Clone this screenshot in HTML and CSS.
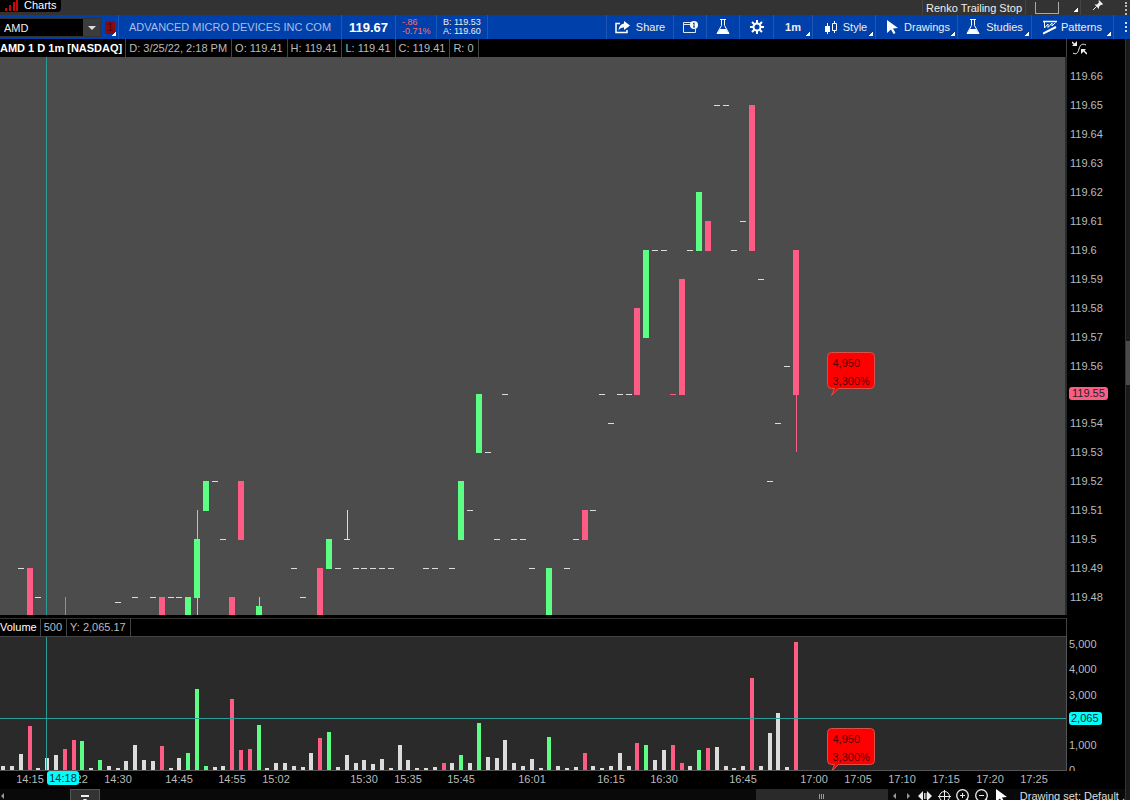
FILE: index.html
```html
<!DOCTYPE html>
<html lang="en">
  <head>
    <meta charset="utf-8">
    <title>Charts - AMD</title>
    <link rel="stylesheet" href="styles.css">
  </head>
  <body>
    <header class="tabs">
      <button class="tab">
        <svg width="14" height="11" viewBox="0 0 14 11" fill="#c40a0a"><path d="M0 8h2v3H0zM4 5h2v6H4zM8 2h2v9H8zM11 0h2v11h-2z"/></svg>
        Charts
      </button>
      <button class="study-name">Renko Trailing Stop</button>
      <button class="grid-pick more" aria-label="Chart grid"><span class="box"></span></button>
      <button class="pin" aria-label="Pin">
        <svg width="10" height="10" viewBox="0 0 10 10"><path d="M6 0l4 4-1 1-1-.3-2 2V9L1.500 4.500H4l2-2L5.500 1z" fill="#eee"/><path d="M3.500 6.500L0 10" stroke="#eee"/></svg>
      </button>
      <span class="grip"></span>
    </header>

    <div class="toolbar">
      <div class="symbol">
        <input type="text" id="symbol" value="AMD" aria-label="Symbol">
        <button class="drop" aria-label="Symbol list"><svg width="8" height="4" viewBox="0 0 8 4"><path d="M0 0h8L4 4z" fill="#ddd"/></svg></button>
      </div>
      <button class="link-color more" aria-label="Link color"><span class="swatch">1</span></button>
      <div class="company">ADVANCED MICRO DEVICES INC COM</div>
      <div class="last">119.67</div>
      <div class="quote down"><span>-.86</span><span>-0.71%</span></div>
      <div class="quote"><span>B: 119.53</span><span>A: 119.60</span></div>
      <div class="spacer"></div>
      <button class="tool share">
        <svg width="15" height="13" viewBox="0 0 15 13"><path d="M5 2.500H1v9h11V9" fill="none" stroke="#fff" stroke-width="1.500"/><path d="M9 0l6 4.500L9 9V6.500C6.500 6.300 4.800 7.500 3.500 9.500 3.800 5.500 5.800 3 9 2.500z" fill="#fff"/></svg>
        Share
      </button>
      <button class="tool alert" aria-label="Alerts">
        <svg width="15" height="13" viewBox="0 0 15 13"><path d="M8 1.500H.5v10h12V8M.5 3.500H7" fill="none" stroke="#dfe8fa"/><circle cx="11" cy="4" r="4" fill="#fff"/><path d="M11 1.500V6M10 2.500h1M10 6h2" stroke="#0040ab"/></svg>
      </button>
      <button class="tool alert" aria-label="Edit studies">
        <svg width="14" height="16" viewBox="0 0 14 16"><path d="M4 .5h6M5.500 1v5.500L1 14.500h12L8.500 6.500V1" fill="none" stroke="#fff"/><path d="M4 10h6l3 5H1z" fill="#fff"/></svg>
      </button>
      <button class="tool gear" aria-label="Settings">
        <svg width="14" height="14" viewBox="0 0 14 14" fill="none" stroke="#fff"><circle cx="7" cy="7" r="3.500" stroke-width="2"/><path d="M7 0v3M7 11v3M0 7h3M11 7h3M2 2l2.300 2.300M9.700 9.700L12 12M12 2L9.700 4.300M4.300 9.700L2 12" stroke-width="2"/></svg>
      </button>
      <button class="tool frame more">1m</button>
      <button class="tool style more">
        <svg width="12" height="13" viewBox="0 0 12 13"><path d="M2.500 2v11M9.500 0v3M9.500 10v2" stroke="#fff"/><path d="M0 5h5v6H0z" fill="#fff"/><path d="M7.500 2.500h4v7h-4z" fill="none" stroke="#fff"/></svg>
        Style
      </button>
      <button class="tool drawings more">
        <svg width="11" height="14" viewBox="0 0 11 14"><path d="M0 0l11 8-5 .5 2.500 4.500-2 1L4 9.500 0 13z" fill="#fff"/></svg>
        Drawings
      </button>
      <button class="tool studies more">
        <svg width="14" height="16" viewBox="0 0 14 16"><path d="M4 .5h6M5.500 1v5.500L1 14.500h12L8.500 6.500V1" fill="none" stroke="#fff"/><path d="M4 10h6l3 5H1z" fill="#fff"/></svg>
        Studies
      </button>
      <button class="tool patterns more">
        <svg width="14" height="15" viewBox="0 0 14 15" fill="none" stroke="#fff"><path d="M0 1.500h14" stroke-width="1.500"/><path d="M1.500 2v6L5 4v3.500L9 3v3l3.500-3.500"/><path d="M0 13.500L13 7" stroke-width="2"/></svg>
        Patterns
      </button>
      <span class="grip"></span>
    </div>

    <main class="workspace">
      <div class="panes">
        <div class="status">
          <b>AMD 1 D 1m [NASDAQ]</b>
          <span>D: 3/25/22, 2:18 PM</span>
          <span>O: 119.41</span>
          <span>H: 119.41</span>
          <span>L: 119.41</span>
          <span>C: 119.41</span>
          <span>R: 0</span>
        </div>
        <div class="corner">
          <svg width="15" height="14" viewBox="0 0 15 14" fill="none" stroke="#eee"><path d="M1 12c3 2 5 0 6-4s3-6 7-4"/><path d="M0 1l3 3M15 13l-3.500-3.500" stroke-width="1.500"/><path d="M5 0v5H0zM9 8h5L9 13z" fill="#eee" stroke="none"/></svg>
        </div>

        <svg class="plot" id="price"></svg>
        <svg class="axis" id="price-axis"></svg>

        <div class="status volume-status">
          <em>Volume</em>
          <span>500</span>
          <span>Y: 2,065.17</span>
        </div>
        <div class="blank"></div>

        <svg class="plot volume" id="volume"></svg>
        <svg class="axis" id="volume-axis"></svg>

        <svg class="time" id="time-axis"></svg>

        <footer class="bottom">
          <button class="scroll-left" aria-label="Scroll left"><svg width="3" height="6" viewBox="0 0 3 6"><path d="M3 0v6L0 3z" fill="#999"/></svg></button>
          <button class="collapse" aria-label="Collapse pane"><svg width="8" height="7" viewBox="0 0 8 7"><path d="M0 0h8v2H0zM2 4h4L4 7z" fill="#eee"/></svg></button>
          <div class="spacer"></div>
          <div class="thumb"><i></i><i></i><i></i></div>
          <button class="step" aria-label="Step left"><svg width="3" height="6" viewBox="0 0 3 6"><path d="M3 0v6L0 3z" fill="#999"/></svg></button>
          <button class="step" aria-label="Step right"><svg width="3" height="6" viewBox="0 0 3 6"><path d="M0 0v6l3-3z" fill="#999"/></svg></button>
          <button class="icon" aria-label="Expand"><svg width="14" height="10" viewBox="0 0 14 10"><path d="M5 0v10L0 5zM9 0v10l5-5z" fill="#eee"/><path d="M6.500 2v6M8 2v6" stroke="#ccc"/></svg></button>
          <button class="icon" aria-label="Crosshair"><svg width="13" height="13" viewBox="0 0 13 13" fill="none" stroke="#eee"><circle cx="6.500" cy="6.500" r="5"/><path d="M6.500 0v13M0 6.500h13"/></svg></button>
          <button class="icon" aria-label="Zoom in"><svg width="14" height="14" viewBox="0 0 14 14" fill="none" stroke="#eee"><circle cx="6.500" cy="6.500" r="5.800" stroke-width="1.300"/><path d="M4 6.500h5M6.500 4v5"/><path d="M10.500 10.500L14 14" stroke-width="2"/></svg></button>
          <button class="icon" aria-label="Zoom out"><svg width="14" height="14" viewBox="0 0 14 14" fill="none" stroke="#eee"><circle cx="6.500" cy="6.500" r="5.800" stroke-width="1.300"/><path d="M4 6.500h5"/><path d="M10.500 10.500L14 14" stroke-width="2"/></svg></button>
          <button class="icon" aria-label="Pointer"><svg width="11" height="14" viewBox="0 0 11 14"><path d="M0 0l11 8-5 .5 2.500 4.500-2 1L4 9.500 0 13z" fill="#fff"/></svg></button>
          <button class="set">Drawing set: Default .</button>
        </footer>
      </div>
      <div class="gutter"><span></span></div>
    </main>

    <script src="chart.js"></script>
  </body>
</html>
```
FILE: styles.css
```css
* {
  box-sizing: border-box;
}

body {
  display: flex;
  flex-direction: column;
  height: 100vh;
  margin: 0;
  overflow: hidden;
  background: #000;
  color: #bbb;
  font: 11px/14px "Liberation Sans", Arial, sans-serif;
}

button,
input {
  margin: 0;
  padding: 0;
  border: 0;
  background: none;
  color: inherit;
  font: inherit;
}

svg {
  flex: none;
}

.spacer {
  flex: 1;
}

/* top tabs */
.tabs {
  display: flex;
  height: 15px;
  background: #333;
  color: #eee;
}
.tab {
  display: flex;
  gap: 5px;
  width: 61px;
  height: 12px;
  padding-left: 5px;
  line-height: 10px;
  background: #000;
  color: #fff;
  border-radius: 0 0 4px 0;
}
.study-name {
  margin-left: auto;
  padding: 0 3px;
  line-height: 10px;
  height: 15px;
  border: solid #444;
  border-width: 0 1px;
}
.tabs button {
  align-items: flex-start;
}
.grid-pick {
  width: 55px;
  padding-left: 9px;
  text-align: left;
  border-right: 1px solid #444;
}
.box {
  display: block;
  width: 24px;
  height: 12px;
  border: 1px solid #aaa;
  border-top: 0;
}
.pin {
  display: flex;
  width: 44px;
  padding-left: 12px;
}
.grip {
  width: 5px;
  margin-top: 2px;
  border-left: 2px dotted #bbb;
}

/* small corner triangle on menu buttons */
.more {
  position: relative;
}
.more::after {
  content: "";
  position: absolute;
  right: 2px;
  bottom: 3px;
  width: 4px;
  height: 4px;
  background: linear-gradient(135deg, transparent 50%, #fff 50%);
}

/* toolbar */
.toolbar {
  display: flex;
  height: 24px;
  background: #0040ab;
  color: #eee;
}
.toolbar > div,
.toolbar > button {
  border-right: 1px solid #1c57b8;
}
.toolbar .symbol {
  display: flex;
  width: 101px;
  margin: 3px 0 2px;
  background: #000;
  border: 1px solid #333;
  border-left: 0;
}
.symbol input {
  flex: 1;
  min-width: 0;
  padding-left: 4px;
}
.drop {
  display: flex;
  align-items: center;
  justify-content: center;
  width: 17px;
  background: #3c3c3c;
}
.toolbar .link-color {
  width: 18px;
  padding: 0 4px;
}
.swatch {
  display: block;
  width: 10px;
  height: 13px;
  background: #8a0a12;
  color: #4c0008;
  line-height: 13px;
}
.company {
  width: 223px;
  padding-left: 10px;
  color: #a8bfe8;
  line-height: 24px;
}
.last {
  width: 54px;
  color: #fff;
  font-weight: bold;
  font-size: 13px;
  line-height: 26px;
  text-align: center;
}
.quote {
  display: flex;
  flex-direction: column;
  width: 51px;
  padding: 3px 0 0 6px;
  font-size: 9px;
  line-height: 9px;
}
.quote.down {
  width: 41px;
  color: #ff6a6a;
}
.tool {
  display: flex;
  align-items: center;
  justify-content: center;
  gap: 6px;
}
.share { width: 67px; }
.alert { width: 33px; }
.gear { width: 34px; }
.frame { width: 39px; font-weight: bold; }
.style { width: 63px; padding-left: 4px; }
.drawings { width: 82px; padding-left: 4px; }
.studies { width: 74px; }
.patterns { width: 82px; gap: 4px; }
.toolbar .grip {
  margin: 7px 0 7px 11px;
  border-color: #cfe0ff;
}

/* chart panes */
.workspace {
  display: flex;
  flex: 1;
  min-height: 0;
}
.panes {
  display: grid;
  flex: 1;
  min-width: 0;
  grid-template-columns: 1fr 58px;
  grid-template-rows: 18px 1fr 22px 134px 18px 11px;
}
.status {
  display: flex;
  border-right: 1px solid #444;
  line-height: 18px;
}
.status > * {
  padding: 0 4px 0 3px;
  border-right: 1px solid #444;
  white-space: nowrap;
}
.status b,
.status em {
  padding: 0 3px 0 0;
  color: #fff;
  font-style: normal;
}
.volume-status {
  margin-top: 3px;
  border-top: 1px solid #333;
  border-bottom: 1px solid #444;
  line-height: 17px;
}
.corner {
  padding: 2px 5px;
}
.plot {
  display: block;
  width: 100%;
  height: 100%;
  background: #4c4c4c;
  border-right: 2px solid #2a2a2a;
}
.plot.volume {
  background: #2a2a2a;
  border-right: 1px solid #555;
  border-bottom: 1px solid #555;
}
.axis,
.time {
  display: block;
  width: 100%;
  height: 100%;
  overflow: hidden;
}
.time {
  grid-column: 1 / 3;
}
.gutter {
  width: 5px;
  padding-top: 302px;
  background: #1a1a1a;
  border-left: 1px solid #333;
}
.gutter span {
  display: block;
  height: 44px;
  background: #4a4a4a;
}

/* marks */
.up { fill: #5cff84; }
.dn { fill: #ff5c85; }
.eq { fill: #dcdcdc; }
.cross {
  stroke: #2a9d96;
}
text {
  fill: #bbb;
}
.tag-cursor { fill: #00ffff; }
.tag-last { fill: #ff5c85; }
.tag-text { fill: #10282c; }
.callout {
  fill: #ff0000;
  stroke: #d8504a;
}
.callout-text { fill: #5a0000; }

/* bottom bar */
.bottom {
  grid-column: 1 / 3;
  display: flex;
  align-items: flex-start;
  height: 16px;
  background: #090909;
  color: #ddd;
}
.bottom button {
  display: flex;
  justify-content: center;
  flex: none;
}
.bottom .scroll-left {
  width: 5px;
  margin-right: 65px;
  padding-top: 4px;
}
.bottom .collapse {
  width: 30px;
  height: 16px;
  padding-top: 5px;
  background: #333;
  border: 1px solid #555;
}
.thumb {
  display: flex;
  justify-content: center;
  gap: 1px;
  width: 132px;
  height: 16px;
  padding-top: 5px;
  background: #2a2a2a;
}
.thumb i {
  width: 1px;
  height: 5px;
  background: #999;
}
.bottom .step {
  width: 14px;
  padding-top: 4px;
}
.bottom .icon {
  align-items: center;
  width: 19px;
  height: 14px;
}
.bottom .set {
  margin-left: 9px;
  white-space: nowrap;
}
```
FILE: chart.js
```js
var SLOTS = 121.1,      // bars that fit across the plot
    PRICE_TOP = 66.66,  // cents above 119
    PRICE_BOTTOM = 47.38,
    VOL_TOP = 5290,
    CURSOR = 5;

// [slot, open, close, high, low] in cents above 119, off-screen parts end at 47
var candles = [
  [3, 49, 47], [18, 48, 47], [21, 47, 48], [22, 48, 50, 51, 47],
  [23, 51, 52], [26, 48, 47], [27, 52, 50], [29, 47, 47.7, 48, 47], [36, 49, 47],
  [37, 49, 50], [52, 50, 52], [54, 53, 55], [62, 47, 49], [66, 51, 50],
  [72, 58, 55], [73, 57, 60], [77, 59, 55], [79, 60, 62], [80, 61, 60],
  [85, 65, 60], [90, 60, 55, 60, 53]
];

// slots that opened and closed at the same price
var flats = {
  47.83: [13],
  48: [4, 15, 17, 19, 20, 34],
  49: [2, 33, 38, 40, 41, 42, 43, 44, 48, 49, 51, 60, 64],
  50: [25, 39, 56, 58, 59, 65],
  51: [53, 67],
  52: [24, 87],
  53: [55],
  54: [69, 88],
  55: [57, 68, 70, 71],
  56: [89],
  59: [86],
  60: [74, 75, 78, 83],
  61: [84],
  65: [81, 82]
};

var volumes = [
  170, 170, 650, 1740, 60, 470, 580, 820, 1180, 1150, 60, 380, 170, 60, 340, 980,
  380, 340, 940, 60, 470, 670, 3210, 170, 100, 170, 2840, 780, 830, 1770, 60, 270,
  270, 170, 100, 670, 1270, 1510, 130, 580, 270, 380, 230, 450, 60, 980, 380, 60,
  60, 130, 270, 270, 610, 270, 1850, 500, 470, 1180, 270, 170, 450, 60, 1320, 170,
  60, 130, 670, 170, 60, 170, 670, 170, 1080, 1010, 380, 780, 980, 270, 170, 810,
  870, 910, 170, 60, 170, 3660, 170, 1490, 2280, 130, 5090
];
var volUp = [9, 11, 21, 22, 23, 29, 37, 52, 54, 62, 73, 79],
    volDown = [3, 7, 8, 18, 26, 27, 28, 36, 50, 66, 72, 76, 77, 80, 85, 90];

var times = {
  3: "14:15", 8: "14:22", 13: "14:30", 20: "14:45", 26: "14:55", 31: "15:02",
  41: "15:30", 46: "15:35", 52: "15:45", 60: "16:01", 69: "16:15", 75: "16:30",
  84: "16:45", 92: "17:00", 97: "17:05", 102: "17:10", 107: "17:15",
  112: "17:20", 117: "17:25"
};

function $(id) { return document.getElementById(id); }

function add(svg, name, attrs, text) {
  var el = document.createElementNS("http://www.w3.org/2000/svg", name);
  for (var k in attrs) el.setAttribute(k, attrs[k]);
  if (text) el.textContent = text;
  svg.appendChild(el);
  return el;
}

function rect(svg, cls, x, y, w, h, rx) {
  add(svg, "rect", { "class": cls, x: x, y: y, width: w, height: h, rx: rx || 0 });
}

function line(svg, x1, y1, x2, y2) {
  add(svg, "line", { "class": "cross", x1: x1, y1: y1, x2: x2, y2: y2 });
}

function callout(svg, x, y) {
  add(svg, "path", {
    "class": "callout",
    d: "M" + (x + 4) + " " + y + "h39q4 0 4 4v28q0 4 -4 4h-32l-7 7l3 -7h-3q-4 0 -4 -4v-28q0 -4 4 -4z"
  });
  add(svg, "text", { "class": "callout-text", x: x + 5, y: y + 14 }, "4,950");
  add(svg, "text", { "class": "callout-text", x: x + 5, y: y + 32 }, "3,300%");
}

function draw() {
  ["price", "price-axis", "volume", "volume-axis", "time-axis"].forEach(function(id) {
    $(id).textContent = "";
  });

  var price = $("price"), vol = $("volume"),
      box = price.getBoundingClientRect(),
      width = box.width, height = box.height,
      volHeight = vol.getBoundingClientRect().height - 1,
      pitch = width / SLOTS;

  function x(slot) { return 3.1 + slot * pitch; }
  function y(p) { return Math.round((PRICE_TOP - p) / (PRICE_TOP - PRICE_BOTTOM) * height); }
  function vy(v) { return Math.round(volHeight * (1 - v / VOL_TOP)); }

  candles.forEach(function(c) {
    var cls = c[2] > c[1] ? "up" : "dn",
        cx = Math.round(x(c[0])),
        top = y(Math.max(c[1], c[2])),
        bottom = y(Math.min(c[1], c[2]));
    if (c.length > 3) rect(price, cls, cx, y(c[3]), 1, y(c[4]) - y(c[3]));
    rect(price, cls, cx - 3, top, 6, bottom - top + 1);
  });
  Object.keys(flats).forEach(function(p) {
    flats[p].forEach(function(slot) {
      rect(price, "eq", Math.round(x(slot)) - 3, y(+p), 6, 1);
    });
  });
  rect(price, "dn", Math.round(x(76)) - 3, y(55), 6, 1);
  rect(price, "dn", Math.round(x(7)), y(48), 1, height);
  rect(price, "eq", Math.round(x(39)), y(51), 1, y(50) - y(51));

  volumes.forEach(function(v, i) {
    var cls = volUp.indexOf(i) >= 0 ? "up" : volDown.indexOf(i) >= 0 ? "dn" : "eq";
    rect(vol, cls, Math.round(x(i)) - 2, vy(v), 4, volHeight - vy(v));
  });

  // crosshair
  var cx = Math.floor(x(CURSOR)) - 0.5;
  line(price, cx, 0, cx, height);
  line(vol, cx, 0, cx, volHeight);
  line(vol, 0, vy(2065) + 0.5, width, vy(2065) + 0.5);

  callout(price, Math.round(x(93.5)) + 0.5, y(55) - 41.5);
  callout(vol, Math.round(x(93.5)) + 0.5, volHeight - 41.5);

  var axis = $("price-axis");
  for (var p = 66; p >= 48; p--) {
    if (p === 55) continue;
    add(axis, "text", { x: 3, y: y(p) + 4 }, "119." + String(p).replace(/0$/, ""));
  }
  rect(axis, "tag-last", 2, y(55) - 7, 39, 13, 3);
  add(axis, "text", { "class": "tag-text", x: 5, y: y(55) + 3 }, "119.55");

  axis = $("volume-axis");
  [5000, 4000, 3000, 1000, 0].forEach(function(v) {
    add(axis, "text", { x: 2, y: vy(v) + 4 }, v.toLocaleString("en-US"));
  });
  rect(axis, "tag-cursor", 2, vy(2065) - 6, 33, 13, 3);
  add(axis, "text", { "class": "tag-text", x: 4, y: vy(2065) + 4 }, "2,065");

  axis = $("time-axis");
  Object.keys(times).forEach(function(slot) {
    add(axis, "text", { x: Math.round(x(+slot)), y: 12, "text-anchor": "middle" }, times[slot]);
  });
  rect(axis, "tag-cursor", Math.round(x(CURSOR)), 0, 32, 14, 3);
  add(axis, "text", { "class": "tag-text", x: Math.round(x(CURSOR)) + 16, y: 11, "text-anchor": "middle" }, "14:18");
}

draw();
window.addEventListener("resize", draw);
```
